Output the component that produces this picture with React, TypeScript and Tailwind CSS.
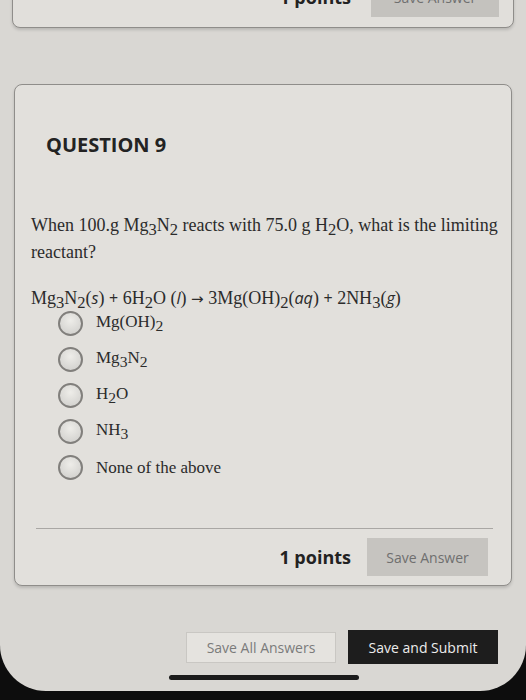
import React from "react";

const sans = { fontFamily: '"Open Sans", "Liberation Sans", sans-serif' };

function Sub({ children }: { children: React.ReactNode }) {
  return <span className="text-[0.92em] align-[-0.25em]">{children}</span>;
}

function I({ children }: { children: React.ReactNode }) {
  return (
    <span className="italic font-['Open_Sans',sans-serif] text-[0.9em]">{children}</span>
  );
}

function Radio({ label }: { label: React.ReactNode }) {
  return (
    <div className="flex items-center h-[36px]">
      <div className="w-[25px] h-[25px] rounded-full border-2 border-[#817f7c] bg-[radial-gradient(circle_at_50%_35%,#eeede9,#cdccc9)] shrink-0" />
      <div className="ml-[13px] text-[17px] text-[#2b2b2b]">{label}</div>
    </div>
  );
}

export default function App() {
  return (
    <div className="w-[526px] h-[700px] bg-[#0d0d0d] overflow-hidden">
      <div className="h-[691px] bg-[#d9d7d3] rounded-b-[46px] overflow-hidden flex flex-col px-[12px]">
        {/* previous card */}
        <div className="mt-[-60px] h-[88px] shrink-0 rounded-[8px] border border-[#8f8d8a] bg-[#e1dfdb] shadow-[0_2px_3px_rgba(0,0,0,0.15)] flex items-end justify-end pr-[14px] pb-[10px]">
          <div className="flex items-center gap-[20px]">
            <span className="text-[18px] font-bold text-[#222]" style={sans}>1 points</span>
            <div className="w-[128px] h-[40px] bg-[#c4c2be] flex items-center justify-center text-[14px] text-[#6f6f6f]" style={sans}>
              Save Answer
            </div>
          </div>
        </div>

        {/* main card */}
        <div className="mt-[56px] h-[502px] shrink-0 mx-[2px] rounded-[8px] border border-[#8f8d8a] bg-[#e2e0dc] shadow-[0_2px_3px_rgba(0,0,0,0.15)] flex flex-col">
          <div className="pt-[46px] pl-[31px] text-[20px] leading-[28px] font-bold text-[#232323]" style={sans}>
            QUESTION 9
          </div>
          <div className="mt-[55px] pl-[16px] pr-[6px] font-['Liberation_Serif',serif] text-[#2b2b2b]">
            <p className="text-[18px] leading-[23px]">
              When 100.g Mg<Sub>3</Sub>N<Sub>2</Sub> reacts with 75.0 g H<Sub>2</Sub>O, what is the limiting reactant?
            </p>
            <p className="mt-[22px] text-[18px] leading-[24px]">
              Mg<Sub>3</Sub>N<Sub>2</Sub>(<I>s</I>) <span style={sans} className="text-[16px]">+</span> 6H<Sub>2</Sub>O (<I>l</I>){" "}
              <span className="font-['DejaVu_Sans',sans-serif] text-[15px]">→</span> 3Mg(OH)<Sub>2</Sub>(<I>aq</I>){" "}
              <span style={sans} className="text-[16px]">+</span> 2NH<Sub>3</Sub>(<I>g</I>)
            </p>
            <div className="mt-[-10px] pl-[27px] flex flex-col">
              <Radio label={<>Mg(OH)<Sub>2</Sub></>} />
              <Radio label={<>Mg<Sub>3</Sub>N<Sub>2</Sub></>} />
              <Radio label={<>H<Sub>2</Sub>O</>} />
              <Radio label={<>NH<Sub>3</Sub></>} />
              <Radio label={<>None of the above</>} />
            </div>
          </div>
          <div className="mt-[43px] ml-[21px] mr-[18px] h-px bg-[#a9a7a4]" />
          <div className="mt-[9px] flex items-center justify-end pr-[23px] gap-[16px]">
            <span className="text-[18px] font-bold text-[#222]" style={sans}>1 points</span>
            <div className="w-[121px] h-[38px] bg-[#c6c4c0] flex items-center justify-center text-[14px] text-[#6f6f6f]" style={sans}>
              Save Answer
            </div>
          </div>
        </div>

        {/* bottom actions */}
        <div className="mt-[44px] flex items-center justify-end pr-[16px] gap-[12px]">
          <div className="w-[150px] h-[31px] bg-[#e5e3df] border border-[#c9c7c3] flex items-center justify-center text-[14px] text-[#7b7b7b]" style={sans}>
            Save All Answers
          </div>
          <div className="w-[150px] h-[34px] bg-[#1d1d1d] flex items-center justify-center text-[14px] text-[#ececec]" style={sans}>
            Save and Submit
          </div>
        </div>
        <div className="mt-[11px] flex justify-start pl-[157px]">
          <div className="w-[190px] h-[5px] rounded-full bg-[#1b1b1b]" />
        </div>
      </div>
    </div>
  );
}
